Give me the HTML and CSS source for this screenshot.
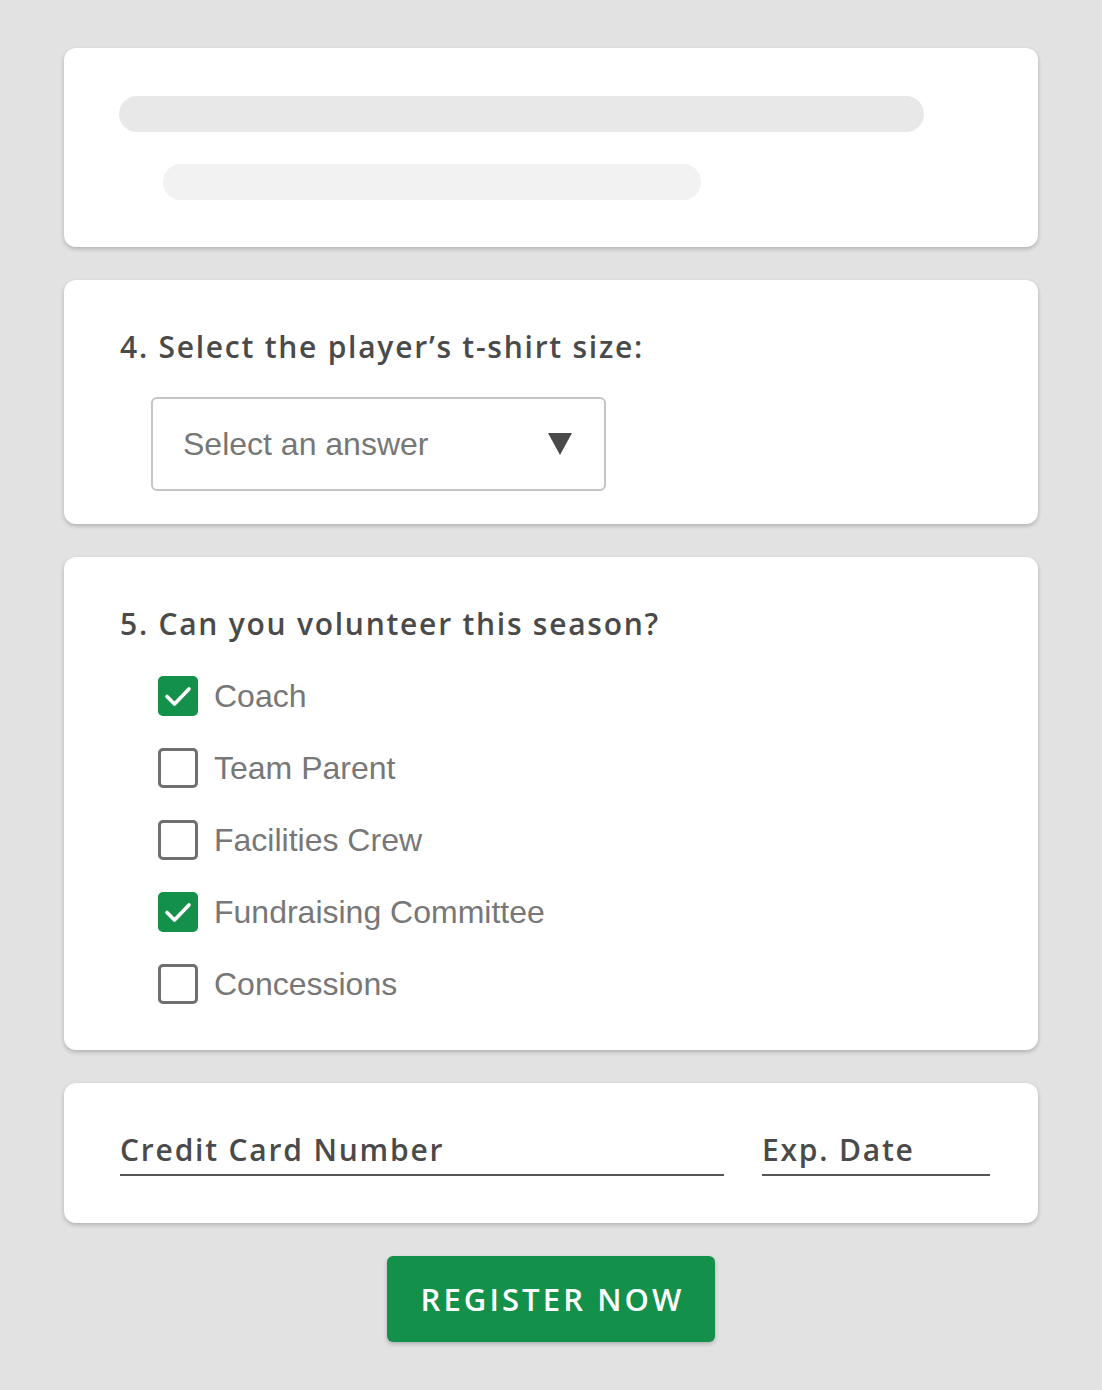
FILE: index.html
```html
<!DOCTYPE html>
<html>
<head>
<meta charset="utf-8">
<link rel="stylesheet" href="styles.css">
</head>
<body>
<main class="page">
  <section class="card card-skeleton">
    <div class="bar bar-long"></div>
    <div class="bar bar-short"></div>
  </section>

  <section class="card card-question">
    <h2 class="question">4. Select the player’s t-shirt size:</h2>
    <div class="select">
      <span class="select-text">Select an answer</span>
      <svg class="select-arrow" width="26" height="24" viewBox="0 0 26 24"><path d="M1 1 H25 L13 23 Z" fill="#4a4a4a"/></svg>
    </div>
  </section>

  <section class="card card-question card-checks">
    <h2 class="question">5. Can you volunteer this season?</h2>
    <ul class="checks">
      <li class="check-row"><span class="box checked"><svg width="40" height="40" viewBox="0 0 40 40"><path d="M9 20.5 L16.5 28 L31 13" fill="none" stroke="#fff" stroke-width="3.6" stroke-linecap="round" stroke-linejoin="round"/></svg></span><span class="check-label">Coach</span></li>
      <li class="check-row"><span class="box"></span><span class="check-label">Team Parent</span></li>
      <li class="check-row"><span class="box"></span><span class="check-label">Facilities Crew</span></li>
      <li class="check-row"><span class="box checked"><svg width="40" height="40" viewBox="0 0 40 40"><path d="M9 20.5 L16.5 28 L31 13" fill="none" stroke="#fff" stroke-width="3.6" stroke-linecap="round" stroke-linejoin="round"/></svg></span><span class="check-label">Fundraising Committee</span></li>
      <li class="check-row"><span class="box"></span><span class="check-label">Concessions</span></li>
    </ul>
  </section>

  <section class="card card-payment">
    <div class="field field-card">Credit Card Number</div>
    <div class="field field-exp">Exp. Date</div>
  </section>

  <div class="actions">
    <button class="register">REGISTER NOW</button>
  </div>
</main>
</body>
</html>
```

FILE: styles.css
```css
html, body {
  margin: 0;
  padding: 0;
  background: #e2e2e2;
}
body {
  font-family: "Liberation Sans", Arial, sans-serif;
}
.page {
  padding: 48px 64px 48px;
  display: flex;
  flex-direction: column;
  gap: 33px;
}
.card {
  background: #fff;
  border-radius: 12px;
  box-shadow: 0 2px 4px rgba(0, 0, 0, 0.22);
  box-sizing: border-box;
}
.card-skeleton {
  padding: 48px 0 47px 55px;
  display: flex;
  flex-direction: column;
  gap: 32px;
}
.bar {
  height: 36px;
  border-radius: 18px;
}
.bar-long {
  width: 805px;
  background: #e8e8e8;
}
.bar-short {
  width: 538px;
  margin-left: 44px;
  background: #f2f2f2;
}
.card-question {
  padding: 47px 56px 33px;
}
.question {
  margin: 0;
  font-family: "Open Sans", sans-serif;
  font-weight: 600;
  font-size: 30px;
  line-height: 40px;
  color: #4a4a4a;
  letter-spacing: 1.75px;
}
.select {
  margin: 30px 0 0 31px;
  width: 455px;
  height: 94px;
  box-sizing: border-box;
  border: 2px solid #c4c4c4;
  border-radius: 6px;
  display: flex;
  align-items: center;
  justify-content: space-between;
  padding: 0 31px 0 30px;
}
.select-text {
  font-size: 32px;
  color: #777;
}
.select-arrow {
  display: block;
}
.card-checks {
  padding-bottom: 30px;
}
.checks {
  list-style: none;
  margin: 16px 0 0 38px;
  padding: 0;
}
.check-row {
  height: 72px;
  display: flex;
  align-items: center;
  gap: 16px;
}
.box {
  width: 40px;
  height: 40px;
  box-sizing: border-box;
  border: 3px solid #6f6f6f;
  border-radius: 5px;
  display: flex;
  align-items: center;
  justify-content: center;
}
.box.checked {
  background: #13914a;
  border: none;
}
.box svg {
  display: block;
}
.check-label {
  font-size: 32px;
  color: #777;
}
.card-payment {
  padding: 47px 48px 47px 56px;
  display: flex;
  gap: 38px;
}
.field {
  font-family: "Open Sans", sans-serif;
  font-weight: 600;
  font-size: 30px;
  line-height: 40px;
  color: #4a4a4a;
  padding-bottom: 4px;
  border-bottom: 2px solid #555;
  letter-spacing: 1.8px;
}
.field-card {
  width: 604px;
}
.field-exp {
  width: 228px;
}
.actions {
  display: flex;
  justify-content: center;
}
.register {
  width: 328px;
  height: 86px;
  background: #13914a;
  color: #fff;
  border: none;
  border-radius: 6px;
  box-shadow: 0 2px 4px rgba(0, 0, 0, 0.22);
  font-family: "Open Sans", sans-serif;
  font-weight: 600;
  font-size: 31px;
  letter-spacing: 3.1px;
  padding: 0 0 0 3px;
}
```
